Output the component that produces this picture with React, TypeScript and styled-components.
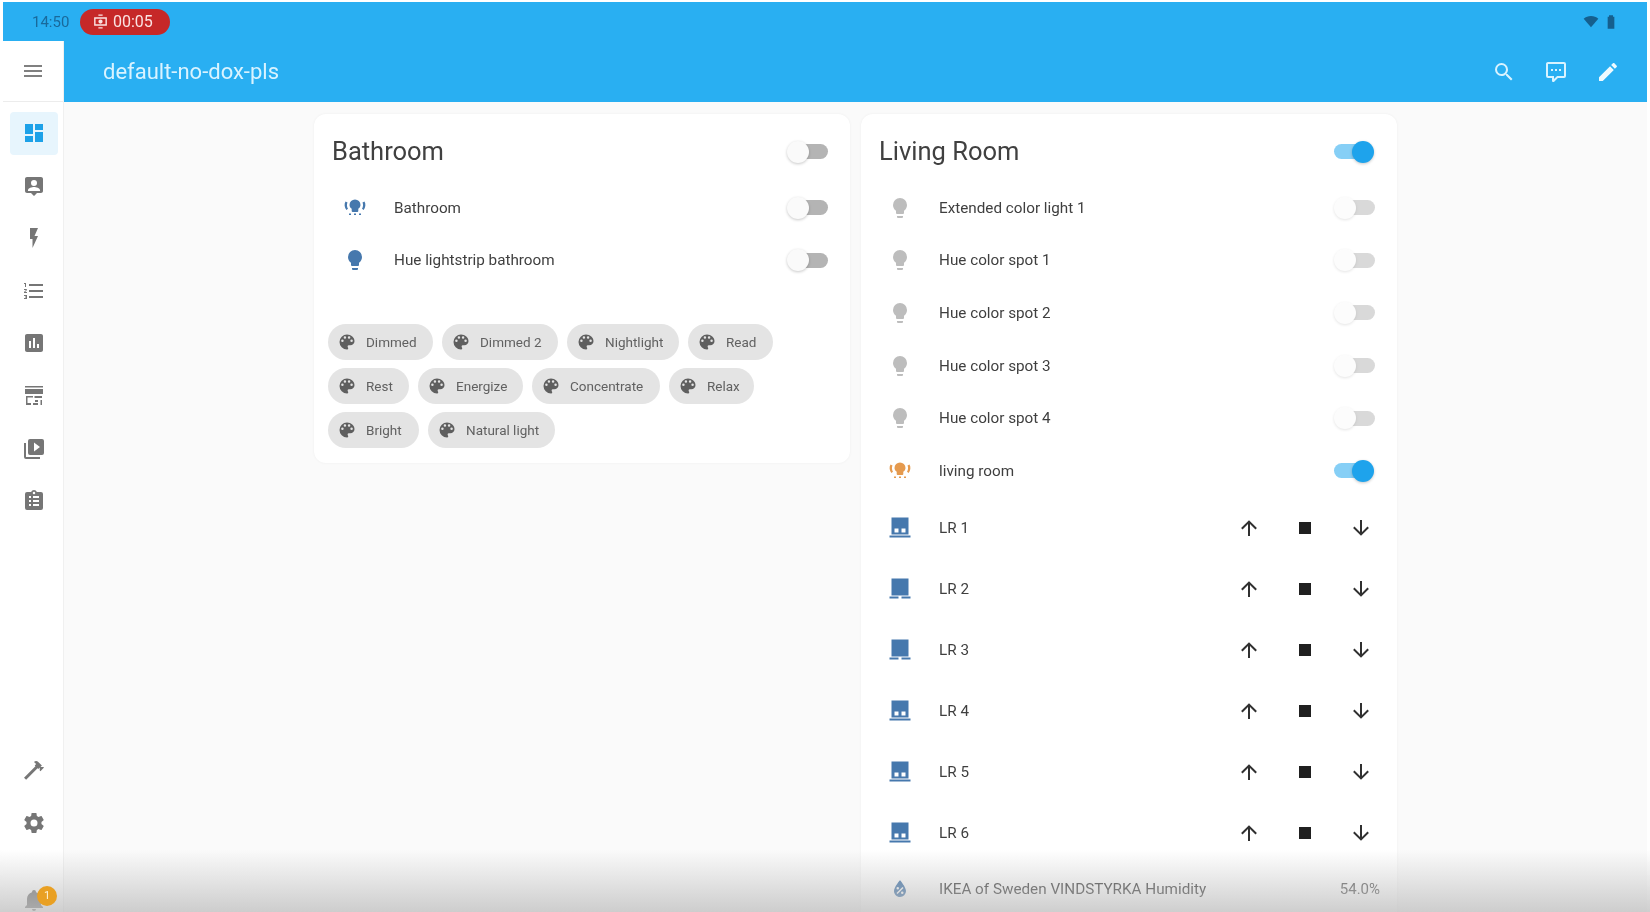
import React from 'react';
import styled, { createGlobalStyle } from 'styled-components';

const GlobalStyle = createGlobalStyle`
  html, body {
    margin: 0;
    height: 100%;
    overflow: hidden;
    background: #ffffff;
    font-family: Roboto, "Liberation Sans", sans-serif;
  }
  * {
    box-sizing: border-box;
  }
`;

const BLUE = '#29aff2';
const STATE_BLUE = '#4678ad';

const mdi = {
  menu: 'M3,6H21V8H3V6M3,11H21V13H3V11M3,16H21V18H3V16Z',
  dashboard: 'M13,3V9H21V3M13,21H21V11H13M3,21H11V15H3M3,13H11V3H3V13Z',
  badge:
    'M19 3H5c-1.1 0-2 .9-2 2v12c0 1.1.9 2 2 2h4l3 3 3-3h4c1.1 0 2-.9 2-2V5c0-1.1-.9-2-2-2zm-7 3a3 3 0 1 1 0 6 3 3 0 0 1 0-6zm6 11H6v-1c0-2 4-3.1 6-3.1s6 1.1 6 3.1v1z',
  flash: 'M8,2V13H10.5V22L16,10H12.5L16,2H8Z',
  list: 'M7,13V11H21V13H7M7,19V17H21V19H7M7,7V5H21V7H7M3,8V5H2V4H4V8H3M2,17V16H5V20H2V19H4V18.5H3V17.5H4V17H2M4.25,10A0.75,0.75 0 0,1 5,10.75C5,10.95 4.92,11.14 4.79,11.27L3.12,13H5V14H2V13.08L4,11H2V10H4.25Z',
  chart:
    'M19 3H5C3.9 3 3 3.9 3 5V19C3 20.1 3.9 21 5 21H19C20.1 21 21 20.1 21 19V5C21 3.9 20.1 3 19 3M9 17H7V10H9V17M13 17H11V7H13V17M17 17H15V13H17V17Z',
  shop: 'M3 2H21V3.5H3V2M3 5H21V10H3V5M4 12H11V13.5H5.5V19H9V21H4V12M12.5 12H20V14H12.5V12M13 16H16V18H13V16M18.5 16H20V21H18.5V16M11 19H16V21H11V19Z',
  media:
    'M4,6H2V20A2,2 0 0,0 4,22H18V20H4V6M20,2H8A2,2 0 0,0 6,4V16A2,2 0 0,0 8,18H20A2,2 0 0,0 22,16V4A2,2 0 0,0 20,2M12,14.5V5.5L18,10L12,14.5Z',
  clipboard:
    'M19 3H14.82C14.4 1.84 13.3 1 12 1S9.6 1.84 9.18 3H5A2 2 0 0 0 3 5V19A2 2 0 0 0 5 21H19A2 2 0 0 0 21 19V5A2 2 0 0 0 19 3M7 7H9V9H7V7M7 11H9V13H7V11M7 15H9V17H7V15M17 17H11V15H17V17M17 13H11V11H17V13M17 9H11V7H17V9M12 2.75A1.25 1.25 0 0 1 13.25 4A1.25 1.25 0 0 1 12 5.25A1.25 1.25 0 0 1 10.75 4A1.25 1.25 0 0 1 12 2.75Z',
  hammer:
    'M2 19.63L13.43 8.2L12.72 7.5L14.14 6.07L12 3.89C13.2 2.7 15.09 2.7 16.27 3.89L19.87 7.5L18.45 8.91H21.29L22 9.62L18.45 13.21L17.74 12.5V9.62L16.27 11.04L15.56 10.33L4.13 21.76L2 19.63Z',
  cog: 'M12,15.5A3.5,3.5 0 0,1 8.5,12A3.5,3.5 0 0,1 12,8.5A3.5,3.5 0 0,1 15.5,12A3.5,3.5 0 0,1 12,15.5M19.43,12.97C19.47,12.65 19.5,12.33 19.5,12C19.5,11.67 19.47,11.34 19.43,11L21.54,9.37C21.73,9.22 21.78,8.95 21.66,8.73L19.66,5.27C19.54,5.05 19.27,4.96 19.05,5.05L16.56,6.05C16.04,5.66 15.5,5.32 14.87,5.07L14.5,2.42C14.46,2.18 14.25,2 14,2H10C9.75,2 9.54,2.18 9.5,2.42L9.13,5.07C8.5,5.32 7.96,5.66 7.44,6.05L4.95,5.05C4.73,4.96 4.46,5.05 4.34,5.27L2.34,8.73C2.21,8.95 2.27,9.22 2.46,9.37L4.57,11C4.53,11.34 4.5,11.67 4.5,12C4.5,12.33 4.53,12.65 4.57,12.97L2.46,14.63C2.27,14.78 2.21,15.05 2.34,15.27L4.34,18.73C4.46,18.95 4.73,19.03 4.95,18.95L7.44,17.94C7.96,18.34 8.5,18.68 9.13,18.93L9.5,21.58C9.54,21.82 9.75,22 10,22H14C14.25,22 14.46,21.82 14.5,21.58L14.87,18.93C15.5,18.67 16.04,18.34 16.56,17.94L19.05,18.95C19.27,19.03 19.54,18.95 19.66,18.73L21.66,15.27C21.78,15.05 21.73,14.78 21.54,14.63L19.43,12.97Z',
  bell: 'M21,19V20H3V19L5,17V11C5,7.9 7.03,5.17 10,4.29C10,4.19 10,4.1 10,4A2,2 0 0,1 12,2A2,2 0 0,1 14,4C14,4.1 14,4.19 14,4.29C16.97,5.17 19,7.9 19,11V17L21,19M14,21A2,2 0 0,1 12,23A2,2 0 0,1 10,21',
  search:
    'M9.5,3A6.5,6.5 0 0,1 16,9.5C16,11.11 15.41,12.59 14.44,13.73L14.71,14H15.5L20.5,19L19,20.5L14,15.5V14.71L13.73,14.44C12.59,15.41 11.11,16 9.5,16A6.5,6.5 0 0,1 3,9.5A6.5,6.5 0 0,1 9.5,3M9.5,5C7,5 5,7 5,9.5C5,12 7,14 9.5,14C12,14 14,12 14,9.5C14,7 12,5 9.5,5Z',
  comment:
    'M9,22A1,1 0 0,1 8,21V18H4A2,2 0 0,1 2,16V4C2,2.89 2.9,2 4,2H20A2,2 0 0,1 22,4V16A2,2 0 0,1 20,18H13.9L10.2,21.71C10,21.9 9.75,22 9.5,22V22H9M10,16V19.08L13.08,16H20V4H4V16H10M17,11H15V9H17V11M13,11H11V9H13V11M9,11H7V9H9V11Z',
  pencil:
    'M20.71,7.04C21.1,6.65 21.1,6 20.71,5.63L18.37,3.29C18,2.9 17.35,2.9 16.96,3.29L15.12,5.12L18.87,8.87M3,17.25V21H6.75L17.81,9.93L14.06,6.18L3,17.25Z',
  bulb: 'M12,2A7,7 0 0,0 5,9C5,11.38 6.19,13.47 8,14.74V17A1,1 0 0,0 9,18H15A1,1 0 0,0 16,17V14.74C17.81,13.47 19,11.38 19,9A7,7 0 0,0 12,2M9,21A1,1 0 0,0 10,22H14A1,1 0 0,0 15,21V20H9V21Z',
  bulbGroup:
    'M12 3.5A5.5 5.5 0 0 0 6.5 9C6.5 10.5 7.4 12 8.7 12.8V15A1 1 0 0 0 9.7 16H14.3A1 1 0 0 0 15.3 15V12.8C16.6 12 17.5 10.5 17.5 9A5.5 5.5 0 0 0 12 3.5M2.5 5.5L4.5 6.6C3.6 8.6 3.8 10.8 5 12.8L3.4 14C1.4 11.4 1 8.2 2.5 5.5M21.5 5.5C23 8.2 22.6 11.4 20.6 14L19 12.8C20.2 10.8 20.4 8.6 19.5 6.6L21.5 5.5M6 17.5H8V19H6V17.5M11 17.5H13V19H11V17.5M16 17.5H18V19H16V17.5Z',
  palette:
    'M17.5,12A1.5,1.5 0 0,1 16,10.5A1.5,1.5 0 0,1 17.5,9A1.5,1.5 0 0,1 19,10.5A1.5,1.5 0 0,1 17.5,12M14.5,8A1.5,1.5 0 0,1 13,6.5A1.5,1.5 0 0,1 14.5,5A1.5,1.5 0 0,1 16,6.5A1.5,1.5 0 0,1 14.5,8M9.5,8A1.5,1.5 0 0,1 8,6.5A1.5,1.5 0 0,1 9.5,5A1.5,1.5 0 0,1 11,6.5A1.5,1.5 0 0,1 9.5,8M6.5,12A1.5,1.5 0 0,1 5,10.5A1.5,1.5 0 0,1 6.5,9A1.5,1.5 0 0,1 8,10.5A1.5,1.5 0 0,1 6.5,12M12,3A9,9 0 0,0 3,12A9,9 0 0,0 12,21A1.5,1.5 0 0,0 13.5,19.5C13.5,19.11 13.35,18.76 13.11,18.5C12.88,18.23 12.73,17.88 12.73,17.5A1.5,1.5 0 0,1 14.23,16H16A5,5 0 0,0 21,11C21,6.58 16.97,3 12,3Z',
  up: 'M13,20H11V8L5.5,13.5L4.08,12.08L12,4.16L19.92,12.08L18.5,13.5L13,8V20Z',
  down: 'M11,4H13V16L18.5,10.5L19.92,11.92L12,19.84L4.08,11.92L5.5,10.5L11,16V4Z',
  stop: 'M18,18H6V6H18V18Z',
  coverOpen:
    'M3.5 1.5H20.5V18.5H3.5V1.5M6.5 12.5V16.5H10.5V12.5H6.5M13.5 12.5V16.5H17.5V12.5H13.5M1.5 19.5H22.5V21.5H1.5V19.5Z',
  coverClosed: 'M3.5 1.5H20.5V18.5H3.5V1.5M1.5 19.5H10.5V21.5H1.5V19.5M13.5 19.5H22.5V21.5H13.5V19.5Z',
  humidity:
    'M12,3.25C12,3.25 6,10 6,14C6,17.32 8.69,20 12,20A6,6 0 0,0 18,14C18,10 12,3.25 12,3.25M14.47,9.97L15.53,11.03L9.53,17.03L8.47,15.97M9.75,10A1.25,1.25 0 0,1 11,11.25A1.25,1.25 0 0,1 9.75,12.5A1.25,1.25 0 0,1 8.5,11.25A1.25,1.25 0 0,1 9.75,10M14.25,14.5A1.25,1.25 0 0,1 15.5,15.75A1.25,1.25 0 0,1 14.25,17A1.25,1.25 0 0,1 13,15.75A1.25,1.25 0 0,1 14.25,14.5Z',
  record: 'M3 6H21V18H3V6M5 8V16H19V8H5M12 9A3 3 0 1 1 12 15A3 3 0 0 1 12 9M9 2H15V4H9V2M9 20H15V22H9V20Z',
  wifi: 'M12 20L1 7C4 4.4 7.8 3 12 3S20 4.4 23 7L12 20Z',
  battery: 'M9 2H15V4H17V22H7V4H9V2Z',
};

const Svg = styled.svg<{ $size: number; $color: string }>`
  display: block;
  flex: none;
  width: ${(p) => p.$size}px;
  height: ${(p) => p.$size}px;
  fill: ${(p) => p.$color};
`;

const Icon = ({ d, size = 24, color = '#767676' }: { d: string; size?: number; color?: string }) => (
  <Svg $size={size} $color={color} viewBox="0 0 24 24">
    <path d={d} fillRule="evenodd" />
  </Svg>
);

const Page = styled.div`
  position: relative;
  height: 100vh;
  padding: 2px 3px 0;
  display: flex;
  flex-direction: column;
  overflow: hidden;
  filter: blur(0.7px);
`;

const StatusBar = styled.div`
  flex: none;
  height: 39px;
  padding: 0 28px 0 29px;
  background: ${BLUE};
  display: flex;
  align-items: center;
`;

const Time = styled.span`
  width: 48px;
  font-size: 15px;
  color: #19699b;
`;

const RecordPill = styled.div`
  width: 90px;
  height: 26px;
  padding-left: 12px;
  border-radius: 13px;
  background: #c62828;
  color: #fbe3e3;
  font-size: 16px;
  display: flex;
  align-items: center;
  gap: 4px;
`;

const StatusIcons = styled.div`
  margin-left: auto;
  display: flex;
  align-items: center;
  gap: 4px;
`;

const Body = styled.div`
  flex: 1;
  min-height: 0;
  display: flex;
`;

const Sidebar = styled.nav`
  flex: none;
  width: 61px;
  background: #ffffff;
  border-right: 1px solid #f0f0f0;
  display: flex;
  flex-direction: column;
`;

const SidebarTop = styled.div`
  flex: none;
  height: 61px;
  border-bottom: 1px solid #ececec;
  display: flex;
  align-items: center;
  justify-content: center;
`;

const NavList = styled.div`
  flex: 1;
  padding: 9.5px 0 0 7px;
  display: flex;
  flex-direction: column;
  gap: 9.6px;
`;

const NavItem = styled.div<{ $active?: boolean; $push?: boolean }>`
  flex: none;
  width: 48px;
  height: 43px;
  border-radius: 4px;
  background: ${(p) => (p.$active ? '#e7f5fd' : 'transparent')};
  margin-top: ${(p) => (p.$push ? 'auto' : '0')};
  display: flex;
  align-items: center;
  justify-content: center;
`;

const BellItem = styled.div`
  position: relative;
  flex: none;
  width: 48px;
  height: 24px;
  margin-top: 34px;
  display: flex;
  justify-content: center;
`;

const Badge = styled.span`
  position: absolute;
  z-index: 2;
  top: -2px;
  left: 27px;
  width: 20px;
  height: 20px;
  border-radius: 50%;
  background: #e9a023;
  color: #fff3d6;
  font-size: 11px;
  line-height: 20px;
  text-align: center;
`;

const Main = styled.div`
  flex: 1;
  min-width: 0;
  display: flex;
  flex-direction: column;
`;

const TopBar = styled.header`
  flex: none;
  height: 61px;
  padding: 0 27px 0 39px;
  background: ${BLUE};
  display: flex;
  align-items: center;
`;

const Title = styled.div`
  flex: 1;
  font-size: 22px;
  color: #d9f3ff;
`;

const TopActions = styled.div`
  display: flex;
  gap: 28px;
`;

const Content = styled.main`
  flex: 1;
  min-height: 0;
  padding-top: 12px;
  background: #fafafa;
  display: flex;
  justify-content: center;
  align-items: flex-start;
  gap: 11px;
  overflow: hidden;
`;

const Card = styled.section`
  flex: none;
  width: 536px;
  padding-bottom: 15px;
  border-radius: 12px;
  background: #ffffff;
  box-shadow: 0 0 3px rgba(0, 0, 0, 0.05);
`;

const CardHeader = styled.div`
  height: 67.5px;
  padding: 8px 21px 0 18px;
  display: flex;
  align-items: center;
  justify-content: space-between;
`;

const CardTitle = styled.h2`
  margin: 0;
  margin-top: -2px;
  font-size: 25.5px;
  font-weight: 400;
  color: #404040;
`;

const Row = styled.div<{ $tall?: boolean; $inset?: number }>`
  height: ${(p) => (p.$tall ? 61 : 52.6)}px;
  padding: 0 21px 0 ${(p) => p.$inset ?? 18}px;
  display: flex;
  align-items: center;
`;

const RowIcon = styled.div`
  flex: none;
  width: 60px;
  padding-left: 9px;
`;

const RowName = styled.div`
  flex: 1;
  font-size: 15.25px;
  color: #3f3f3f;
`;

const RowValue = styled.div`
  margin-right: -4px;
  font-size: 15px;
  color: #616161;
`;

const Controls = styled.div`
  margin-right: -13px;
  display: flex;
`;

const ControlButton = styled.div`
  width: 56px;
  display: flex;
  justify-content: center;
`;

const SwitchRoot = styled.div<{ $on?: boolean; $muted?: boolean }>`
  position: relative;
  flex: none;
  width: 42px;
  height: 22px;
  opacity: ${(p) => (p.$muted ? 0.5 : 1)};
  &::before {
    content: '';
    position: absolute;
    top: 3.5px;
    left: ${(p) => (p.$on ? 0 : 3)}px;
    width: ${(p) => (p.$on ? 36 : 38)}px;
    height: 15px;
    border-radius: 8px;
    background: ${(p) => (p.$on ? '#86cff6' : '#b4b4b4')};
  }
  &::after {
    content: '';
    position: absolute;
    top: 0;
    left: ${(p) => (p.$on ? 18 : 0)}px;
    width: 22px;
    height: 22px;
    border-radius: 50%;
    background: ${(p) => (p.$on ? '#1ea3ec' : '#fafafa')};
    box-shadow: 0 1px 3px rgba(0, 0, 0, 0.22);
  }
`;

const ChipGroup = styled.div`
  margin-top: 37.5px;
  padding: 0 13px 0 14px;
  display: flex;
  flex-wrap: wrap;
  gap: 8px 9px;
`;

const Chip = styled.div<{ $width: number }>`
  width: ${(p) => p.$width}px;
  height: 36px;
  padding-left: 9px;
  border-radius: 18px;
  background: #e4e4e4;
  color: #616161;
  font-size: 13.5px;
  display: flex;
  align-items: center;
  gap: 9px;
  white-space: nowrap;
`;

const BottomFade = styled.div`
  position: absolute;
  left: 0;
  right: 0;
  bottom: 0;
  height: 62px;
  background: linear-gradient(rgba(190, 190, 190, 0), rgba(190, 190, 190, 0.75));
  pointer-events: none;
`;

const NAV_ICONS = [mdi.badge, mdi.flash, mdi.list, mdi.chart, mdi.shop, mdi.media, mdi.clipboard];

const CHIPS: [string, number][] = [
  ['Dimmed', 105],
  ['Dimmed 2', 116],
  ['Nightlight', 112],
  ['Read', 85],
  ['Rest', 81],
  ['Energize', 105],
  ['Concentrate', 128],
  ['Relax', 85],
  ['Bright', 91],
  ['Natural light', 127],
];

const SPOTS = ['Extended color light 1', 'Hue color spot 1', 'Hue color spot 2', 'Hue color spot 3', 'Hue color spot 4'];

const COVERS: [string, string][] = [
  ['LR 1', mdi.coverOpen],
  ['LR 2', mdi.coverClosed],
  ['LR 3', mdi.coverClosed],
  ['LR 4', mdi.coverOpen],
  ['LR 5', mdi.coverOpen],
  ['LR 6', mdi.coverOpen],
];

const App = () => {
  return (
    <>
      <GlobalStyle />
      <Page>
        <StatusBar>
          <Time>14:50</Time>
          <RecordPill>
            <Icon d={mdi.record} size={17} color="#fbe3e3" />
            00:05
          </RecordPill>
          <StatusIcons>
            <Icon d={mdi.wifi} size={16} color="#155f8e" />
            <Icon d={mdi.battery} size={16} color="#155f8e" />
          </StatusIcons>
        </StatusBar>
        <Body>
          <Sidebar>
            <SidebarTop>
              <Icon d={mdi.menu} color="#808080" />
            </SidebarTop>
            <NavList>
              <NavItem $active>
                <Icon d={mdi.dashboard} color="#1da1e8" />
              </NavItem>
              {NAV_ICONS.map((d) => (
                <NavItem key={d}>
                  <Icon d={d} />
                </NavItem>
              ))}
              <NavItem $push>
                <Icon d={mdi.hammer} />
              </NavItem>
              <NavItem>
                <Icon d={mdi.cog} />
              </NavItem>
              <BellItem>
                <Icon d={mdi.bell} />
                <Badge>1</Badge>
              </BellItem>
            </NavList>
          </Sidebar>
          <Main>
            <TopBar>
              <Title>default-no-dox-pls</Title>
              <TopActions>
                <Icon d={mdi.search} color="#d9f3ff" />
                <Icon d={mdi.comment} color="#d9f3ff" />
                <Icon d={mdi.pencil} color="#eefaff" />
              </TopActions>
            </TopBar>
            <Content>
              <Card>
                <CardHeader>
                  <CardTitle>Bathroom</CardTitle>
                  <SwitchRoot />
                </CardHeader>
                <Row $inset={20}>
                  <RowIcon>
                    <Icon d={mdi.bulbGroup} color={STATE_BLUE} />
                  </RowIcon>
                  <RowName>Bathroom</RowName>
                  <SwitchRoot />
                </Row>
                <Row $inset={20}>
                  <RowIcon>
                    <Icon d={mdi.bulb} color={STATE_BLUE} />
                  </RowIcon>
                  <RowName>Hue lightstrip bathroom</RowName>
                  <SwitchRoot />
                </Row>
                <ChipGroup>
                  {CHIPS.map(([name, width]) => (
                    <Chip key={name} $width={width}>
                      <Icon d={mdi.palette} size={20} color="#5f5f5f" />
                      {name}
                    </Chip>
                  ))}
                </ChipGroup>
              </Card>
              <Card>
                <CardHeader>
                  <CardTitle>Living Room</CardTitle>
                  <SwitchRoot $on />
                </CardHeader>
                {SPOTS.map((name) => (
                  <Row key={name}>
                    <RowIcon>
                      <Icon d={mdi.bulb} color="#bdbdbd" />
                    </RowIcon>
                    <RowName>{name}</RowName>
                    <SwitchRoot $muted />
                  </Row>
                ))}
                <Row>
                  <RowIcon>
                    <Icon d={mdi.bulbGroup} color="#e59a4e" />
                  </RowIcon>
                  <RowName>living room</RowName>
                  <SwitchRoot $on />
                </Row>
                {COVERS.map(([name, d]) => (
                  <Row key={name} $tall>
                    <RowIcon>
                      <Icon d={d} color={STATE_BLUE} />
                    </RowIcon>
                    <RowName>{name}</RowName>
                    <Controls>
                      <ControlButton>
                        <Icon d={mdi.up} color="#303030" />
                      </ControlButton>
                      <ControlButton>
                        <Icon d={mdi.stop} color="#202020" />
                      </ControlButton>
                      <ControlButton>
                        <Icon d={mdi.down} color="#303030" />
                      </ControlButton>
                    </Controls>
                  </Row>
                ))}
                <Row>
                  <RowIcon>
                    <Icon d={mdi.humidity} color={STATE_BLUE} />
                  </RowIcon>
                  <RowName>IKEA of Sweden VINDSTYRKA Humidity</RowName>
                  <RowValue>54.0%</RowValue>
                </Row>
              </Card>
            </Content>
          </Main>
        </Body>
        <BottomFade />
      </Page>
    </>
  );
};

export default App;
